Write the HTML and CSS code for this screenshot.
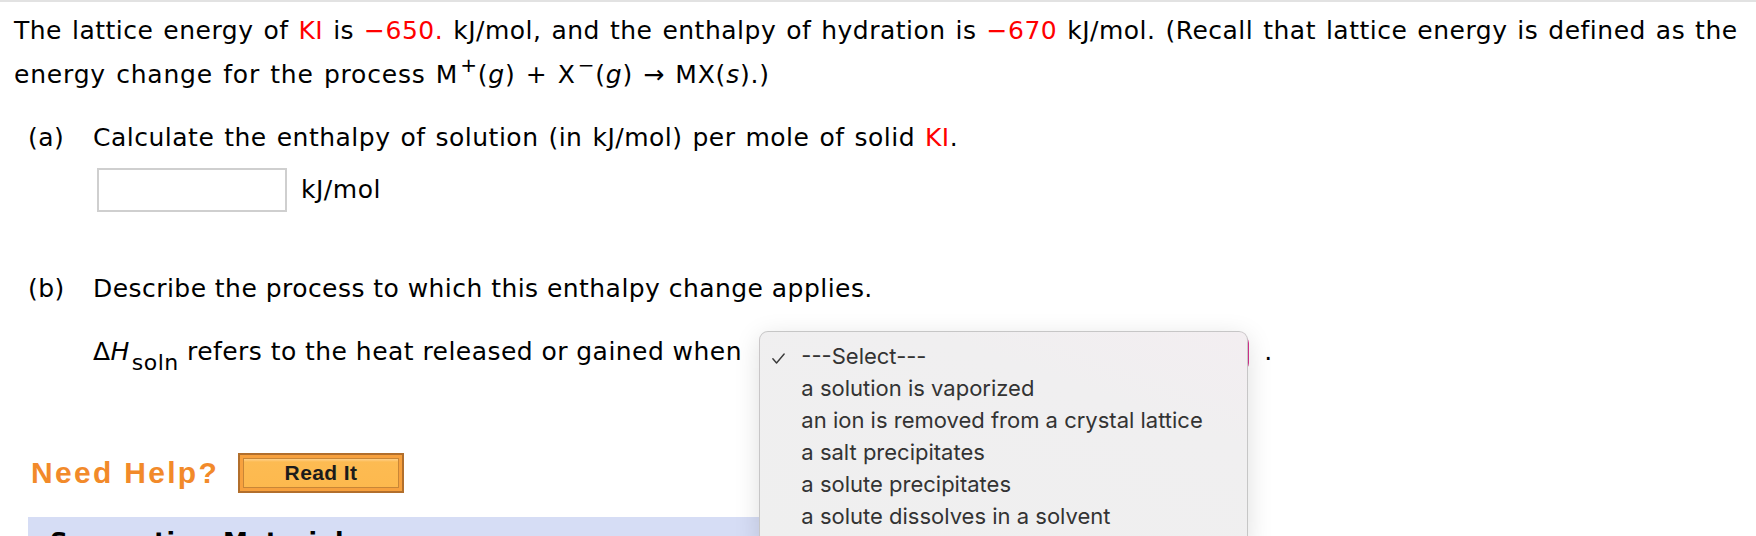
FILE: index.html
```html
<!DOCTYPE html>
<html>
<head>
<meta charset="utf-8">
<link rel="stylesheet" href="styles.css">
</head>
<body>
<div class="page">
  <p class="intro">The lattice energy of <span class="red">KI</span> is <span class="red">&minus;650.</span> kJ/mol, and the enthalpy of hydration is <span class="red">&minus;670</span> kJ/mol. (Recall that lattice energy is defined as the<br><span class="line2">energy change for the process M<sup>+</sup>(<i>g</i>) + X<sup>&minus;</sup>(<i>g</i>) &rarr; MX(<i>s</i>).)</span></p>

  <div class="part">
    <span class="label">(a)</span>
    <div class="part-body">
      <p>Calculate the enthalpy of solution (in kJ/mol) per mole of solid <span class="red">KI</span>.</p>
      <div class="answer">
        <span class="input"></span>
        <span class="unit">kJ/mol</span>
      </div>
    </div>
  </div>

  <div class="part part-b">
    <span class="label">(b)</span>
    <div class="part-body">
      <p>Describe the process to which this enthalpy change applies.</p>
      <p class="statement">&Delta;<i>H</i><sub>soln</sub> refers to the heat released or gained when <span class="select-wrap"><span class="select"></span><span class="menu">
          <span class="opt"><svg class="check" viewBox="0 0 12 10"><path d="M0.8 5.2 L4.2 9.2 L11.2 0.8" fill="none" stroke="#3a3a3a" stroke-width="1.3" stroke-linecap="round" stroke-linejoin="round"/></svg>---Select---</span>
          <span class="opt">a solution is vaporized</span>
          <span class="opt">an ion is removed from a crystal lattice</span>
          <span class="opt">a salt precipitates</span>
          <span class="opt">a solute precipitates</span>
          <span class="opt">a solute dissolves in a solvent</span>
        </span></span>.</p>
    </div>
  </div>

  <div class="help">
    <span class="need">Need Help?</span>
    <span class="read-it"><span class="read-inner">Read It</span></span>
  </div>

  <div class="support">Supporting Materials</div>
</div>
</body>
</html>
```

FILE: styles.css
```css
html, body {
  margin: 0;
  padding: 0;
  overflow: hidden;
  background: #ffffff;
}

body {
  font-family: Verdana, "DejaVu Sans", sans-serif;
  font-size: 25px;
  line-height: 44px;
  letter-spacing: 0.5px;
  word-spacing: 1.5px;
  color: #000000;
}

p {
  margin: 0;
}

.page {
  border-top: 2px solid #e2e2e2;
  padding: 7px 14px 0 14px;
}

.line2 {
  letter-spacing: 0.8px;
}

.red {
  color: #ff0000;
}

sup {
  font-size: 20px;
  line-height: 0;
  vertical-align: 11px;
  margin-left: 2px;
}

sub {
  font-size: 22px;
  line-height: 0;
  vertical-align: -10px;
  margin-left: 2px;
}

.part {
  display: grid;
  grid-template-columns: 65px 1fr;
  margin-top: 19px;
  padding-left: 14px;
}

.part-b {
  margin-top: 55px;
}

.part-b p {
  letter-spacing: 0.45px;
  word-spacing: 0;
}

.answer {
  display: flex;
  align-items: center;
  gap: 14px;
  margin-top: 8px;
  padding-left: 4px;
}

.input {
  display: block;
  width: 190px;
  height: 44px;
  box-sizing: border-box;
  border: 2px solid #cfcfcf;
  background: #ffffff;
}

.statement {
  margin-top: 19px;
}

.select-wrap {
  position: relative;
  display: inline-block;
  width: 495px;
  height: 34px;
  vertical-align: middle;
  margin-left: 4px;
  margin-right: 15px;
}

.select {
  display: block;
  height: 100%;
  box-sizing: border-box;
  border-right: 3px solid #d6328f;
  border-radius: 7px;
}

.menu {
  position: absolute;
  z-index: 10;
  left: 5px;
  top: -5px;
  width: 489px;
  height: 216px;
  box-sizing: border-box;
  border: 1px solid rgba(0, 0, 0, 0.17);
  border-radius: 9px;
  background: linear-gradient(200deg, #f3eef1 0%, #f0eff0 30%, #efefef 100%);
  box-shadow: 0 6px 26px rgba(0, 0, 0, 0.13);
  padding: 8px 0 0 41px;
  font-family: Inter, "Liberation Sans", sans-serif;
  font-size: 22px;
  letter-spacing: 0;
  word-spacing: 0;
  line-height: 32px;
  color: #333333;
}

.opt {
  position: relative;
  display: block;
  white-space: nowrap;
}

.check {
  position: absolute;
  left: -29px;
  top: 13px;
  width: 13px;
  height: 11px;
}

.help {
  display: flex;
  align-items: center;
  margin-top: 79px;
  padding-left: 17px;
  word-spacing: 0;
}

.need {
  width: 207px;
  font-family: "Liberation Sans", Arial, sans-serif;
  font-weight: bold;
  font-size: 30px;
  letter-spacing: 2.3px;
  color: #f28a2a;
  line-height: 34px;
}

.read-it {
  display: flex;
  width: 166px;
  height: 40px;
  box-sizing: border-box;
  border: 2px solid #b26f2c;
  background: #f7a13e;
  padding: 3px;
}

.read-inner {
  flex: 1;
  display: flex;
  align-items: center;
  justify-content: center;
  border: 1px solid #c98636;
  background: linear-gradient(#ffd089 0, #fdbb52 3px, #fdb94e 100%);
  font-family: "Liberation Sans", Arial, sans-serif;
  font-weight: bold;
  font-size: 21px;
  letter-spacing: 0.4px;
  line-height: 24px;
  color: #1b1b1b;
}

.support {
  margin-top: 24px;
  margin-left: 14px;
  width: 1000px;
  height: 44px;
  padding: 3px 0 0 22px;
  background: #d6ddf5;
  font-weight: bold;
}
```
